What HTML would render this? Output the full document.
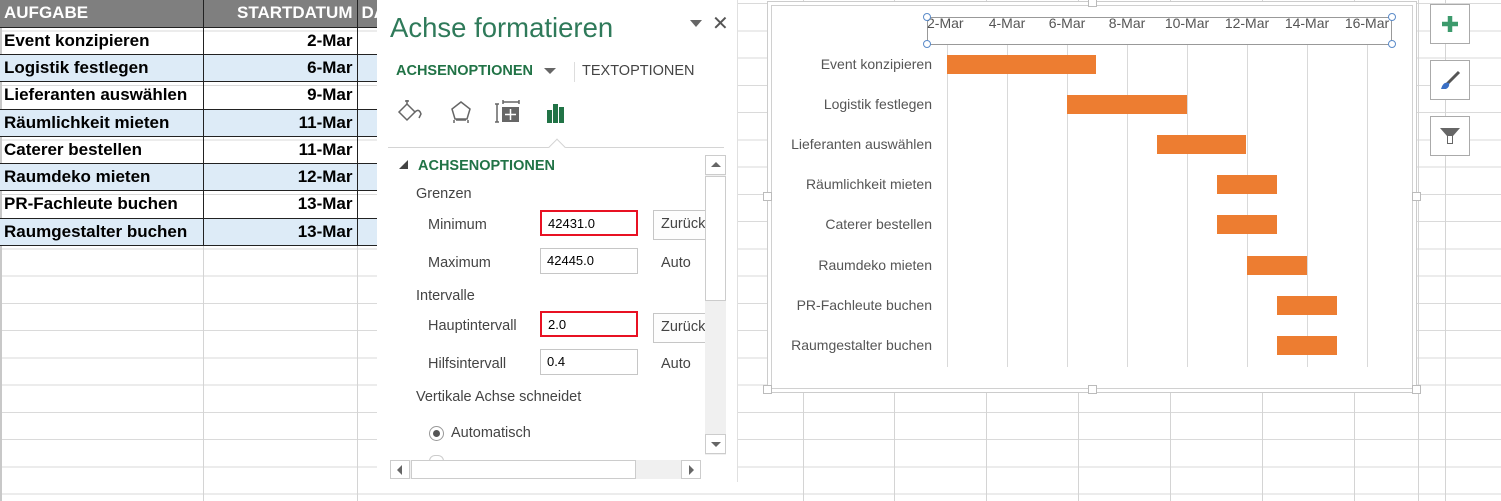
<!DOCTYPE html>
<html><head><meta charset="utf-8"><style>
*{margin:0;padding:0;box-sizing:border-box}
body{width:1501px;height:501px;overflow:hidden;position:relative;background:#fff;font-family:"Liberation Sans",sans-serif}
.a{position:absolute}
.grid{left:0;top:0;width:1501px;height:501px;
background-image:repeating-linear-gradient(to bottom,transparent 0 3px,#dadada 3px 4px,transparent 4px 27.25px);}
.vl{position:absolute;top:0;width:1px;height:501px;background:#d4d4d4}
table{position:absolute;left:0;top:0;border-collapse:collapse;font-weight:bold;font-size:17px}
td{height:27.25px;border-bottom:1.5px solid #222;border-right:1.5px solid #222;padding:0 4px;white-space:nowrap;overflow:hidden}
tr.h td{background:#7f7f7f;color:#fff;font-size:17px}
tr.b td{background:#ddebf7}
.panel{left:377px;top:0;width:361px;height:482px;background:#fff;border-right:1px solid #e0e0e0}
.g{color:#217346}
.inp{position:absolute;width:98px;height:26px;border:1px solid #c6c6c6;font-size:13px;padding:4px 6px;background:#fff}
.red{border:2px solid #e81123}
.lbl{position:absolute;font-size:14.5px;color:#444}
.btn{position:absolute;width:60px;height:30px;border:1px solid #c6c6c6;background:#fdfdfd;font-size:14.5px;color:#444;padding:5px 7px;overflow:hidden;white-space:nowrap}
.chart{left:771px;top:5px;width:642px;height:384px;background:#fff;border:1px solid #d0d0d0}
.cl{position:absolute;right:0;font-size:14px;color:#555;text-align:right;width:200px}
.bar{position:absolute;height:19px;background:#ed7d31}
.gl{position:absolute;top:44px;width:1px;height:323px;background:#d9d9d9}
.ax{position:absolute;top:15px;font-size:14px;color:#555;width:60px;text-align:center}
.hd{position:absolute;width:8px;height:8px;border:1px solid #5b8bc9;border-radius:50%;background:#fff}
.sq{position:absolute;width:9px;height:9px;border:1px solid #bbb;background:#fff}
.side{position:absolute;left:1430px;width:40px;height:40px;border:1px solid #aaa;background:#fff}
</style></head><body>
<div class="a grid"></div>
<div class="vl" style="left:0;background:#c8c8c8;width:2px"></div>
<div class="vl" style="left:203px"></div>
<div class="vl" style="left:357px"></div>
<div class="vl" style="left:803px"></div>
<div class="vl" style="left:894px"></div>
<div class="vl" style="left:986px"></div>
<div class="vl" style="left:1078px"></div>
<div class="vl" style="left:1170px"></div>
<div class="vl" style="left:1262px"></div>
<div class="vl" style="left:1354px"></div>
<div class="vl" style="left:1418px"></div>
<div class="vl" style="left:1445px"></div>

<table>
<tr class="h"><td style="width:203px">AUFGABE</td><td style="width:154px;text-align:right">STARTDATUM</td><td style="width:25px">DA</td></tr>
<tr><td>Event konzipieren</td><td style="text-align:right">2-Mar</td><td></td></tr>
<tr class="b"><td>Logistik festlegen</td><td style="text-align:right">6-Mar</td><td></td></tr>
<tr><td>Lieferanten auswählen</td><td style="text-align:right">9-Mar</td><td></td></tr>
<tr class="b"><td>Räumlichkeit mieten</td><td style="text-align:right">11-Mar</td><td></td></tr>
<tr><td>Caterer bestellen</td><td style="text-align:right">11-Mar</td><td></td></tr>
<tr class="b"><td>Raumdeko mieten</td><td style="text-align:right">12-Mar</td><td></td></tr>
<tr><td>PR-Fachleute buchen</td><td style="text-align:right">13-Mar</td><td></td></tr>
<tr class="b"><td>Raumgestalter buchen</td><td style="text-align:right">13-Mar</td><td></td></tr>
</table>

<div class="a panel">
 <div class="a" style="left:13px;top:12px;font-size:27.5px;color:#2f7a5a">Achse formatieren</div>
 <div class="a" style="left:313px;top:20px;width:0;height:0;border-left:6px solid transparent;border-right:6px solid transparent;border-top:7px solid #666"></div>
 <div class="a" style="left:335px;top:11px;font-size:20px;color:#555">✕</div>
 <div class="a g" style="left:19px;top:63px;font-size:14.5px;font-weight:bold">ACHSENOPTIONEN</div>
 <div class="a" style="left:167px;top:68px;width:0;height:0;border-left:6px solid transparent;border-right:6px solid transparent;border-top:6px solid #666"></div>
 <div class="a" style="left:197px;top:62px;width:1px;height:20px;background:#ddd"></div>
 <div class="a" style="left:205px;top:63px;font-size:14.5px;color:#444">TEXTOPTIONEN</div>
 <svg class="a" style="left:18px;top:98px" width="200" height="30" viewBox="0 0 200 30">
  <g fill="none" stroke="#666" stroke-width="1.5">
   <path d="M4 14 L12 6 L20 14 L12 22 Z"/><path d="M12 6 V2 M10 3 h4"/><path d="M20 14 q4 -4 6 2 l-2 4"/>
   <path d="M66 4 L75 11 L72 21 L60 21 L57 11 Z"/><path d="M59 22 v3 M73 22 v3 M61 22h10"/>
   <path d="M102 6 v18 M100 6h4 M100 24h4 M108 4h16 M108 2v4 M124 2v4"/>
  </g>
  <rect x="107" y="9" width="17" height="15" fill="#666"/>
  <path d="M115.5 11 v11 M110 16.5 h11" stroke="#fff" stroke-width="1.5"/>
  <rect x="152" y="12" width="5" height="13" fill="#217346"/><rect x="158" y="6" width="5" height="19" fill="#217346"/><rect x="164" y="9" width="5" height="16" fill="#217346"/>
 </svg>
 <div class="a" style="left:11px;top:147px;width:336px;height:1px;background:#d4d4d4"></div>
 <div class="a" style="left:174px;top:141px;width:12px;height:12px;background:#fff;border-left:1px solid #d4d4d4;border-top:1px solid #d4d4d4;transform:rotate(45deg)"></div>
 <div class="a" style="left:22px;top:160px;width:0;height:0;border-left:9px solid transparent;border-bottom:9px solid #444"></div>
 <div class="a g" style="left:41px;top:158px;font-size:14.5px;font-weight:bold">ACHSENOPTIONEN</div>
 <div class="lbl" style="left:39px;top:186px">Grenzen</div>
 <div class="lbl" style="left:51px;top:217px">Minimum</div>
 <div class="inp red" style="left:163px;top:210px">42431.0</div>
 <div class="btn" style="left:276px;top:210px">Zurück</div>
 <div class="lbl" style="left:51px;top:255px">Maximum</div>
 <div class="inp" style="left:163px;top:248px">42445.0</div>
 <div class="lbl" style="left:284px;top:255px">Auto</div>
 <div class="lbl" style="left:39px;top:288px">Intervalle</div>
 <div class="lbl" style="left:51px;top:318px">Hauptintervall</div>
 <div class="inp red" style="left:163px;top:311px">2.0</div>
 <div class="btn" style="left:276px;top:313px">Zurück</div>
 <div class="lbl" style="left:51px;top:356px">Hilfsintervall</div>
 <div class="inp" style="left:163px;top:349px">0.4</div>
 <div class="lbl" style="left:284px;top:356px">Auto</div>
 <div class="lbl" style="left:39px;top:389px">Vertikale Achse schneidet</div>
 <div class="a" style="left:52px;top:426px;width:15px;height:15px;border:1px solid #999;border-radius:50%;background:#fff"></div>
 <div class="a" style="left:56px;top:430px;width:7px;height:7px;border-radius:50%;background:#555"></div>
 <div class="lbl" style="left:74px;top:425px">Automatisch</div>
 <div class="a" style="left:52px;top:455px;width:15px;height:6px;border:1px solid #ccc;border-bottom:none;border-radius:8px 8px 0 0"></div>
 <div class="a" style="left:328px;top:155px;width:21px;height:300px;background:#f0f0f0"></div>
 <div class="a" style="left:328px;top:155px;width:21px;height:20px;border:1px solid #ccc;background:#fff"></div>
 <div class="a" style="left:334px;top:162px;border-left:5px solid transparent;border-right:5px solid transparent;border-bottom:5px solid #666;width:0;height:0"></div>
 <div class="a" style="left:328px;top:176px;width:21px;height:125px;border:1px solid #ccc;background:#fff"></div>
 <div class="a" style="left:328px;top:434px;width:21px;height:20px;border:1px solid #ccc;background:#fff"></div>
 <div class="a" style="left:334px;top:442px;border-left:5px solid transparent;border-right:5px solid transparent;border-top:5px solid #666;width:0;height:0"></div>
 <div class="a" style="left:13px;top:460px;width:310px;height:19px;background:#f0f0f0"></div>
 <div class="a" style="left:13px;top:460px;width:20px;height:19px;border:1px solid #ccc;background:#fff"></div>
 <div class="a" style="left:20px;top:465px;border-top:5px solid transparent;border-bottom:5px solid transparent;border-right:5px solid #666;width:0;height:0"></div>
 <div class="a" style="left:34px;top:460px;width:225px;height:19px;border:1px solid #ccc;background:#fff"></div>
 <div class="a" style="left:304px;top:460px;width:20px;height:19px;border:1px solid #ccc;background:#fff"></div>
 <div class="a" style="left:312px;top:465px;border-top:5px solid transparent;border-bottom:5px solid transparent;border-left:5px solid #666;width:0;height:0"></div>
</div>

<div class="a" style="left:767px;top:1px;width:650px;height:392px;border:1px solid #ccc;background:#fff"></div>
<div class="a chart"></div>
<div class="gl" style="left:947px"></div><div class="gl" style="left:1007px"></div><div class="gl" style="left:1067px"></div><div class="gl" style="left:1127px"></div><div class="gl" style="left:1187px"></div><div class="gl" style="left:1247px"></div><div class="gl" style="left:1307px"></div><div class="gl" style="left:1367px"></div>
<div class="a" style="left:927px;top:17px;width:465px;height:28px;border:1px solid #999"></div>
<div class="ax" style="left:927px;width:44px;text-align:left">2-Mar</div>
<div class="ax" style="left:977px">4-Mar</div>
<div class="ax" style="left:1037px">6-Mar</div>
<div class="ax" style="left:1097px">8-Mar</div>
<div class="ax" style="left:1157px">10-Mar</div>
<div class="ax" style="left:1217px">12-Mar</div>
<div class="ax" style="left:1277px">14-Mar</div>
<div class="ax" style="left:1337px">16-Mar</div>
<div class="hd" style="left:923px;top:13px"></div><div class="hd" style="left:1388px;top:13px"></div>
<div class="hd" style="left:923px;top:40px"></div><div class="hd" style="left:1388px;top:40px"></div>
<div class="cl" style="left:732px;top:56px">Event konzipieren</div>
<div class="cl" style="left:732px;top:96px">Logistik festlegen</div>
<div class="cl" style="left:732px;top:136px">Lieferanten auswählen</div>
<div class="cl" style="left:732px;top:176px">Räumlichkeit mieten</div>
<div class="cl" style="left:732px;top:216px">Caterer bestellen</div>
<div class="cl" style="left:732px;top:257px">Raumdeko mieten</div>
<div class="cl" style="left:732px;top:297px">PR-Fachleute buchen</div>
<div class="cl" style="left:732px;top:337px">Raumgestalter buchen</div>
<div class="bar" style="left:947px;top:55px;width:149px"></div>
<div class="bar" style="left:1067px;top:95px;width:120px"></div>
<div class="bar" style="left:1157px;top:135px;width:89px"></div>
<div class="bar" style="left:1217px;top:175px;width:60px"></div>
<div class="bar" style="left:1217px;top:215px;width:60px"></div>
<div class="bar" style="left:1247px;top:256px;width:60px"></div>
<div class="bar" style="left:1277px;top:296px;width:60px"></div>
<div class="bar" style="left:1277px;top:336px;width:60px"></div>
<div class="sq" style="left:763px;top:385px"></div><div class="sq" style="left:1088px;top:385px"></div><div class="sq" style="left:1412px;top:385px"></div>
<div class="sq" style="left:763px;top:192px"></div><div class="sq" style="left:1412px;top:192px"></div>
<div class="sq" style="left:1088px;top:-2px"></div>

<div class="side" style="top:4px"><svg width="38" height="38"><path d="M19 11v16M11 19h16" stroke="#3c9a6c" stroke-width="4.5"/></svg></div>
<div class="side" style="top:60px"><svg width="38" height="38"><path d="M16 23 L28 11" stroke="#555" stroke-width="3"/><path d="M10 28 q2 -8 8 -6 q1 4 -3 6 z" fill="#3a6fc4"/></svg></div>
<div class="side" style="top:116px"><svg width="38" height="38"><path d="M9 11h20l-7 8v8h-6v-8z" fill="#666"/><path d="M17 19v7h4v-7" fill="#fff"/></svg></div>
</body></html>
